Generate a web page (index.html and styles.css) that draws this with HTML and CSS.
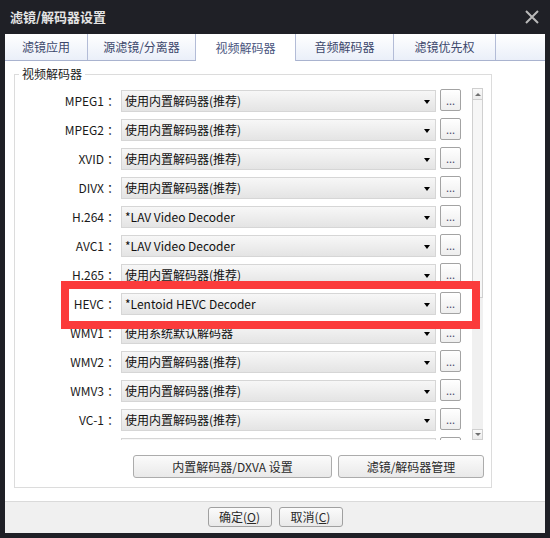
FILE: index.html
```html
<!DOCTYPE html>
<html lang="zh-CN">
<head>
<meta charset="utf-8">
<title>滤镜/解码器设置</title>
<link rel="stylesheet" href="styles.css">
</head>
<body>
<div class="window">
  <div class="titlebar">
    <span class="title">滤镜/解码器设置</span>
    <svg class="close" width="14" height="14" viewBox="0 0 14 14"><path d="M1 1L13 13M13 1L1 13" stroke="#b9b9b9" stroke-width="2" fill="none"/></svg>
  </div>
  <div class="panel">
    <div class="tabs">
      <div class="tab t1">滤镜应用</div>
      <div class="tab t2">源滤镜/分离器</div>
      <div class="tab t3 active">视频解码器</div>
      <div class="tab t4">音频解码器</div>
      <div class="tab t5">滤镜优先权</div>
    </div>
    <div class="group">
      <div class="legend">视频解码器</div>
      <div class="listwrap">
        <div class="list">
          <div class="row"><span class="label">MPEG1<span class="colon">：</span></span><div class="combo"><span class="val">使用内置解码器(推荐)</span><span class="arrow"></span></div><div class="more">...</div></div>
          <div class="row"><span class="label">MPEG2<span class="colon">：</span></span><div class="combo"><span class="val">使用内置解码器(推荐)</span><span class="arrow"></span></div><div class="more">...</div></div>
          <div class="row"><span class="label">XVID<span class="colon">：</span></span><div class="combo"><span class="val">使用内置解码器(推荐)</span><span class="arrow"></span></div><div class="more">...</div></div>
          <div class="row"><span class="label">DIVX<span class="colon">：</span></span><div class="combo"><span class="val">使用内置解码器(推荐)</span><span class="arrow"></span></div><div class="more">...</div></div>
          <div class="row"><span class="label">H.264<span class="colon">：</span></span><div class="combo"><span class="val">*LAV Video Decoder</span><span class="arrow"></span></div><div class="more">...</div></div>
          <div class="row"><span class="label">AVC1<span class="colon">：</span></span><div class="combo"><span class="val">*LAV Video Decoder</span><span class="arrow"></span></div><div class="more">...</div></div>
          <div class="row"><span class="label">H.265<span class="colon">：</span></span><div class="combo"><span class="val">使用内置解码器(推荐)</span><span class="arrow"></span></div><div class="more">...</div></div>
          <div class="row"><span class="label">HEVC<span class="colon">：</span></span><div class="combo"><span class="val">*Lentoid HEVC Decoder</span><span class="arrow"></span></div><div class="more">...</div></div>
          <div class="row"><span class="label">WMV1<span class="colon">：</span></span><div class="combo"><span class="val">使用系统默认解码器</span><span class="arrow"></span></div><div class="more">...</div></div>
          <div class="row"><span class="label">WMV2<span class="colon">：</span></span><div class="combo"><span class="val">使用内置解码器(推荐)</span><span class="arrow"></span></div><div class="more">...</div></div>
          <div class="row"><span class="label">WMV3<span class="colon">：</span></span><div class="combo"><span class="val">使用内置解码器(推荐)</span><span class="arrow"></span></div><div class="more">...</div></div>
          <div class="row"><span class="label">VC-1<span class="colon">：</span></span><div class="combo"><span class="val">使用内置解码器(推荐)</span><span class="arrow"></span></div><div class="more">...</div></div>
          <div class="row"><span class="label"></span><div class="combo"><span class="arrow"></span></div><div class="more"></div></div>
        </div>
        <div class="scrollbar">
          <div class="sb-btn up"><span class="tri-up"></span></div>
          <div class="sb-thumb"></div>
          <div class="sb-track"></div>
          <div class="sb-btn down"><span class="tri-down"></span></div>
        </div>
      </div>
      <div class="actions">
        <div class="btn wide1">内置解码器/DXVA 设置</div>
        <div class="btn wide2">滤镜/解码器管理</div>
      </div>
      <div class="highlight"></div>
    </div>
    <div class="footer">
      <div class="btn small">确定(<u>O</u>)</div>
      <div class="btn small">取消(<u>C</u>)</div>
    </div>
  </div>
</div>
</body>
</html>
```
FILE: styles.css
```css
html, body {
  margin: 0;
  padding: 0;
  background: #1f2026;
}
body {
  font-family: "Noto Sans CJK SC", "Microsoft YaHei", sans-serif;
  font-size: 12px;
  color: #1a1a1a;
}
.window {
  width: 550px;
  height: 538px;
  box-sizing: border-box;
  background: #1f2026;
  padding: 0 5px 5px 5px;
  display: flex;
  flex-direction: column;
}
.titlebar {
  height: 34px;
  display: flex;
  align-items: center;
  justify-content: space-between;
  padding: 0 6px 0 5px;
}
.title {
  color: #e4e4e4;
  font-size: 13px;
  font-weight: 700;
  line-height: 16px;
}
.close {
  display: block;
}
.panel {
  flex: 1;
  background: #ffffff;
  display: flex;
  flex-direction: column;
}
.tabs {
  height: 27px;
  box-sizing: border-box;
  display: flex;
  border-bottom: 1px solid #a9b3cf;
  background: linear-gradient(#ffffff, #eaeff9);
}
.tab {
  box-sizing: border-box;
  border-right: 1px solid #b3bcd7;
  display: flex;
  align-items: center;
  justify-content: center;
  color: #3d486c;
  line-height: 16px;
}
.t1 { width: 83px; }
.t2 { width: 108px; }
.t3 { width: 100px; }
.t4 { width: 98px; }
.t5 { width: 102px; }
.tab.active {
  background: #ffffff;
  margin-bottom: -1px;
  color: #4a5680;
}
.group {
  position: relative;
  margin: 13px 0 0 9px;
  width: 478px;
  height: 414px;
  box-sizing: border-box;
  border: 1px solid #dcdcdc;
}
.legend {
  margin: -9px 0 0 4px;
  padding: 0 3px;
  width: fit-content;
  line-height: 16px;
  background: #ffffff;
  color: #1a1a1a;
}
.listwrap {
  margin-top: 6px;
  height: 352px;
  display: flex;
}
.list {
  width: 457px;
  height: 352px;
  overflow: hidden;
}
.row {
  height: 29px;
  box-sizing: border-box;
  padding-top: 2px;
  display: flex;
  align-items: flex-start;
}
.label {
  width: 100px;
  text-align: right;
  line-height: 22px;
  color: #1a1a1a;
  white-space: nowrap;
}
.colon {
  display: inline-block;
  width: 8px;
  padding-left: 3px;
  text-align: left;
  overflow: visible;
  white-space: nowrap;
}
.combo {
  margin-left: 6px;
  width: 315px;
  height: 22px;
  box-sizing: border-box;
  border: 1px solid #d6d6d6;
  background: linear-gradient(#f7f7f7, #e4e4e4);
  display: flex;
  align-items: center;
  padding-left: 3px;
}
.val {
  line-height: 20px;
  color: #111111;
}
.arrow {
  margin-left: auto;
  margin-right: 5px;
  margin-top: 1px;
  width: 0;
  height: 0;
  border-top: 4px solid #000000;
  border-left: 3.5px solid transparent;
  border-right: 3.5px solid transparent;
}
.more {
  margin-left: 4px;
  margin-top: -1px;
  width: 21px;
  height: 22px;
  box-sizing: border-box;
  border: 1px solid #a3a3a3;
  border-radius: 2px;
  background: linear-gradient(#ffffff, #eeeeee);
  display: flex;
  align-items: flex-end;
  justify-content: center;
  font-size: 11px;
  line-height: 11px;
  padding-bottom: 4px;
  color: #4a4a6a;
}
.scrollbar {
  width: 11px;
  height: 352px;
  display: flex;
  flex-direction: column;
}
.sb-btn {
  box-sizing: border-box;
  border: 1px solid #cfcfcf;
  background: linear-gradient(#fafafa, #ececec);
  display: flex;
  align-items: center;
  justify-content: center;
}
.sb-btn.up { height: 12px; }
.sb-btn.down { height: 11px; }
.tri-up {
  width: 0;
  height: 0;
  border-bottom: 3px solid #707070;
  border-left: 3px solid transparent;
  border-right: 3px solid transparent;
}
.tri-down {
  width: 0;
  height: 0;
  border-top: 3px solid #707070;
  border-left: 3px solid transparent;
  border-right: 3px solid transparent;
}
.sb-thumb {
  height: 198px;
  box-sizing: border-box;
  border: 1px solid #d0d0d0;
  border-top: none;
  background: #f6f6f6;
}
.sb-track {
  flex: 1;
  background: #f0f0f0;
}
.actions {
  margin-top: 15px;
  padding-left: 118px;
  display: flex;
  gap: 6px;
}
.btn {
  box-sizing: border-box;
  border: 1px solid #acacac;
  border-radius: 3px;
  background: linear-gradient(#fbfbfb, #e9e9e9);
  display: flex;
  align-items: center;
  justify-content: center;
  color: #2a2a2a;
  line-height: 16px;
}
.wide1 { width: 199px; height: 23px; }
.wide2 { width: 146px; height: 23px; }
.highlight {
  position: absolute;
  left: 46px;
  top: 206px;
  width: 419px;
  height: 48px;
  box-sizing: border-box;
  border: 8px solid #fb3b3b;
}
.footer {
  margin-top: auto;
  height: 32px;
  box-sizing: border-box;
  border-top: 1px solid #dadada;
  background: #f0f0f0;
  padding-top: 5px;
  display: flex;
  justify-content: center;
  align-items: flex-start;
  gap: 7px;
}
.btn.small {
  width: 64px;
  height: 20px;
  border-color: #a0a0a0;
}
u {
  text-decoration: underline;
}
```
